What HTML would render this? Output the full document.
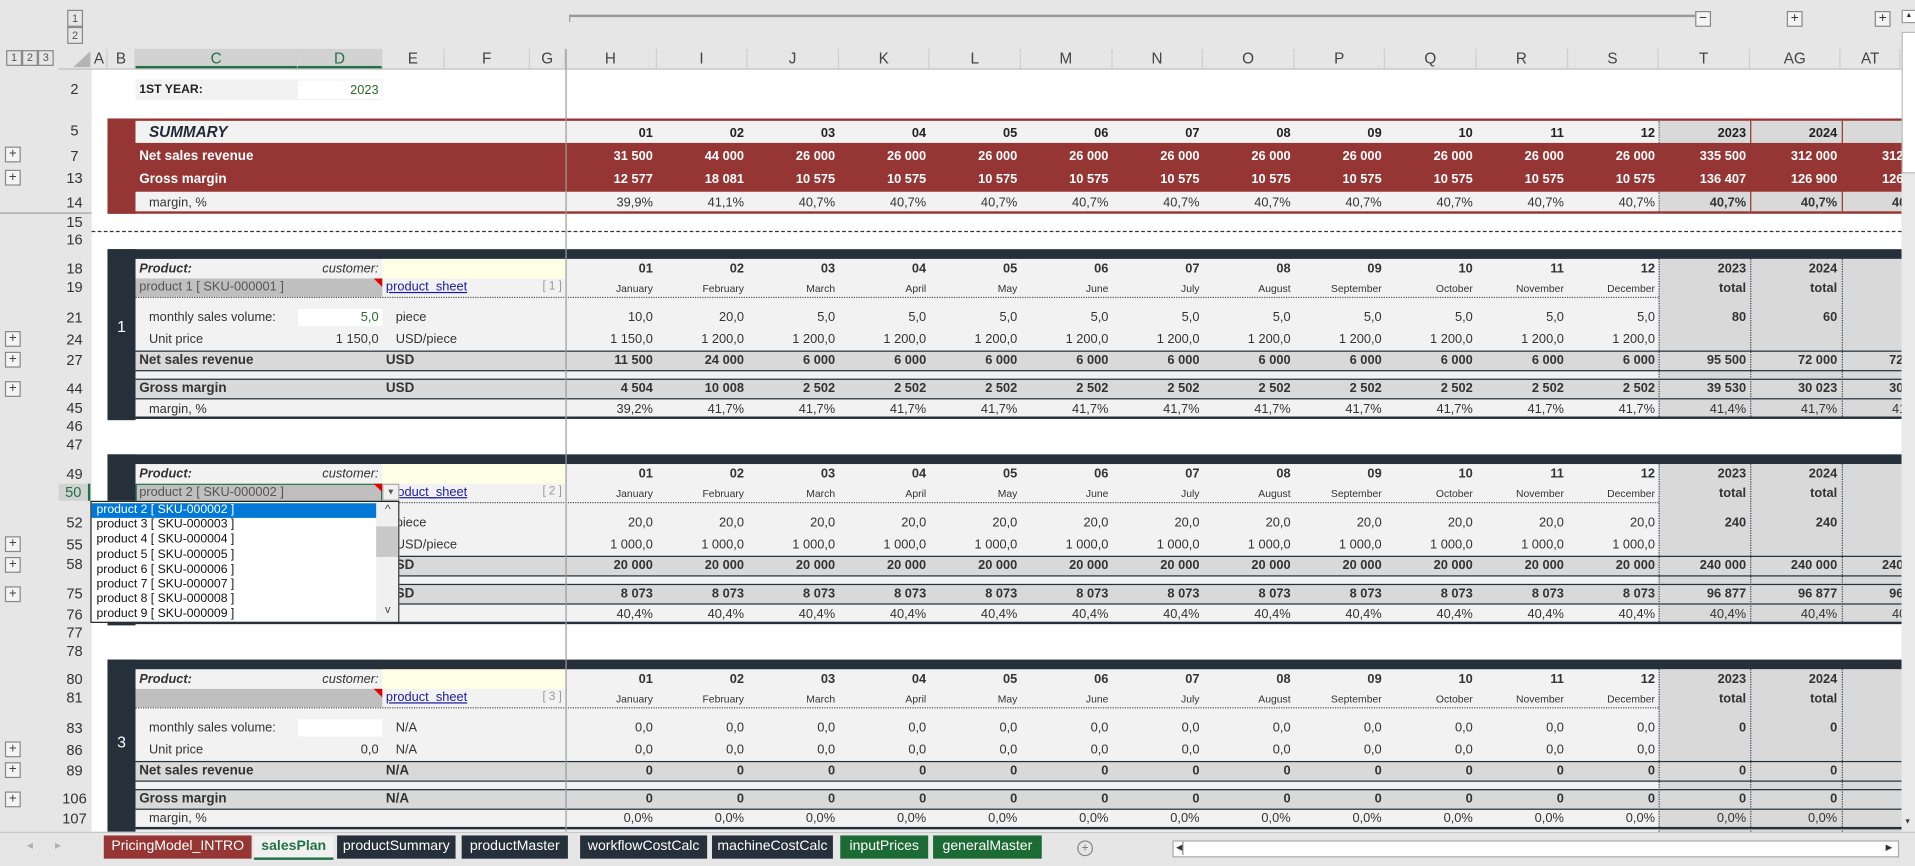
<!DOCTYPE html>
<html><head><meta charset="utf-8">
<style>
html,body{margin:0;padding:0;width:1915px;height:866px;overflow:hidden;background:#e6e6e6}
#w{position:absolute;left:0;top:0;width:1568px;height:709px;transform:scale(1.22130,1.22144);transform-origin:0 0;font-family:"Liberation Sans Narrow","Liberation Sans",sans-serif;font-size:10.5px;color:#333;overflow:hidden;background:#e6e6e6}
.a{position:absolute}
.r{position:absolute;left:463px;width:1094px;display:flex;overflow:hidden;height:16px;line-height:16px}
.r i{flex:0 0 74.6px;text-align:right;padding-right:3px;box-sizing:border-box;font-style:normal;white-space:nowrap}
.b{font-weight:bold}
.sm i{font-size:8.5px}
.rn{position:absolute;left:48px;width:26px;text-align:center;font-size:12px;color:#333;line-height:14px}
.pl{position:absolute;left:4px;width:11px;height:11px;border:1px solid #888;background:#f4f4f4;font-size:11px;line-height:11px;text-align:center;color:#444}
.ch{position:absolute;top:40px;height:16px;line-height:16px;text-align:center;font-size:12.5px;color:#444;border-right:1px solid #cfcfcf;box-sizing:border-box}
.tab{position:absolute;top:684px;height:19px;line-height:19px;text-align:center;font-size:11.5px;color:#fff}
.t{position:absolute;white-space:nowrap;line-height:16px}
.dv{position:absolute;width:0;border-left:1px dotted #3a4654}
</style></head><body><div id="w">

<!-- sheet white area -->
<div class="a" style="left:75px;top:56px;width:1482px;height:625px;background:#fff"></div>

<!-- column headers -->
<div class="a" style="left:60px;top:42px;width:0;height:0;border-left:14px solid transparent;border-bottom:13px solid #b4b4b4"></div>
<div class="ch" style="left:75px;width:13px">A</div>
<div class="ch" style="left:88px;width:23px">B</div>
<div class="ch" style="left:111px;width:133px;background:#d2d2d2;border-bottom:2px solid #217346;color:#217346">C</div>
<div class="ch" style="left:244px;width:69px;background:#d2d2d2;border-bottom:2px solid #217346;color:#217346">D</div>
<div class="ch" style="left:313px;width:51px">E</div>
<div class="ch" style="left:364px;width:70px">F</div>
<div class="ch" style="left:434px;width:29px">G</div>
<div class="a" style="left:463px;top:40px;display:flex">
<div class="ch" style="position:static;width:74.6px">H</div><div class="ch" style="position:static;width:74.6px">I</div><div class="ch" style="position:static;width:74.6px">J</div><div class="ch" style="position:static;width:74.6px">K</div><div class="ch" style="position:static;width:74.6px">L</div><div class="ch" style="position:static;width:74.6px">M</div><div class="ch" style="position:static;width:74.6px">N</div><div class="ch" style="position:static;width:74.6px">O</div><div class="ch" style="position:static;width:74.6px">P</div><div class="ch" style="position:static;width:74.6px">Q</div><div class="ch" style="position:static;width:74.6px">R</div><div class="ch" style="position:static;width:74.6px">S</div><div class="ch" style="position:static;width:74.6px">T</div><div class="ch" style="position:static;width:74.6px">AG</div><div class="ch" style="position:static;width:49px">AT</div>
</div>
<div class="a" style="left:48px;top:56px;width:1509px;height:1px;background:#bdbdbd"></div>

<!-- top outline -->
<div class="a" style="left:55px;top:8px;width:11px;height:12px;border:1px solid #888;font-size:9px;text-align:center;line-height:12px;color:#555">1</div>
<div class="a" style="left:55px;top:22px;width:11px;height:12px;border:1px solid #888;font-size:9px;text-align:center;line-height:12px;color:#555">2</div>
<div class="a" style="left:5px;top:41px;width:11px;height:11px;border:1px solid #888;font-size:9px;text-align:center;line-height:11px;color:#555">1</div>
<div class="a" style="left:18px;top:41px;width:11px;height:11px;border:1px solid #888;font-size:9px;text-align:center;line-height:11px;color:#555">2</div>
<div class="a" style="left:31px;top:41px;width:11px;height:11px;border:1px solid #888;font-size:9px;text-align:center;line-height:11px;color:#555">3</div>
<div class="a" style="left:466px;top:12px;width:922px;height:4px;border-top:2px solid #999;border-left:1px solid #999"></div>
<div class="a" style="left:1388px;top:9px;width:11px;height:11px;border:1px solid #888;background:#f4f4f4;font-size:11px;line-height:10px;text-align:center">−</div>
<div class="a" style="left:1463px;top:9px;width:11px;height:11px;border:1px solid #888;background:#f4f4f4;font-size:11px;line-height:11px;text-align:center">+</div>
<div class="a" style="left:1535px;top:9px;width:11px;height:11px;border:1px solid #888;background:#f4f4f4;font-size:11px;line-height:11px;text-align:center">+</div>

<!-- row numbers -->
<div class="rn" style="top:66px">2</div>
<div class="rn" style="top:100px">5</div>
<div class="rn" style="top:121px">7</div>
<div class="rn" style="top:139px">13</div>
<div class="rn" style="top:159px">14</div>
<div class="rn" style="top:175px">15</div>
<div class="rn" style="top:189px">16</div>
<div class="rn" style="top:213px">18</div>
<div class="rn" style="top:228px">19</div>
<div class="rn" style="top:253px">21</div>
<div class="rn" style="top:271px">24</div>
<div class="rn" style="top:288px">27</div>
<div class="rn" style="top:311px">44</div>
<div class="rn" style="top:327px">45</div>
<div class="rn" style="top:342px">46</div>
<div class="rn" style="top:357px">47</div>
<div class="rn" style="top:381px">49</div>
<div class="rn" style="top:396px;background:#d2d2d2;color:#217346;border-right:2px solid #217346;width:24px">50</div>
<div class="rn" style="top:421px">52</div>
<div class="rn" style="top:439px">55</div>
<div class="rn" style="top:455px">58</div>
<div class="rn" style="top:479px">75</div>
<div class="rn" style="top:496px">76</div>
<div class="rn" style="top:511px">77</div>
<div class="rn" style="top:526px">78</div>
<div class="rn" style="top:549px">80</div>
<div class="rn" style="top:564px">81</div>
<div class="rn" style="top:589px">83</div>
<div class="rn" style="top:607px">86</div>
<div class="rn" style="top:624px">89</div>
<div class="rn" style="top:647px">106</div>
<div class="rn" style="top:663px">107</div>
<div class="a" style="left:0;top:174px;width:75px;height:1px;background:#a0a0a0"></div>

<div class="pl" style="top:120px">+</div><div class="pl" style="top:139px">+</div>
<div class="pl" style="top:271px">+</div><div class="pl" style="top:288px">+</div><div class="pl" style="top:312px">+</div>
<div class="pl" style="top:439px">+</div><div class="pl" style="top:456px">+</div><div class="pl" style="top:480px">+</div>
<div class="pl" style="top:607px">+</div><div class="pl" style="top:624px">+</div><div class="pl" style="top:648px">+</div>

<!-- 1ST YEAR -->
<div class="a" style="left:111px;top:65px;width:202px;height:17px;background:#f2f2f2"></div>
<div class="a" style="left:244px;top:66px;width:68px;height:15px;background:#fff"></div>
<div class="t b" style="left:114px;top:66px;font-size:10px;color:#222">1ST YEAR:</div>
<div class="t" style="left:244px;top:66px;width:66px;text-align:right;color:#2a6b2a">2023</div>

<!-- SUMMARY -->
<div class="a" style="left:88px;top:97px;width:1469px;height:2px;background:#963634"></div>
<div class="a" style="left:88px;top:97px;width:23px;height:78px;background:#963634"></div>
<div class="a" style="left:111px;top:99px;width:1446px;height:18px;background:#f2f2f2"></div>
<div class="a" style="left:111px;top:157px;width:1446px;height:16px;background:#f2f2f2"></div>
<div class="a" style="left:1358px;top:99px;width:199px;height:18px;background:#d9d9d9"></div>
<div class="a" style="left:1358px;top:157px;width:199px;height:16px;background:#d9d9d9"></div>
<div class="a" style="left:88px;top:117px;width:1469px;height:40px;background:#963634"></div>
<div class="a" style="left:88px;top:173px;width:1469px;height:2px;background:#963634"></div>
<div class="dv" style="left:1358px;top:99px;height:18px;border-color:#666"></div><div class="dv" style="left:1358px;top:157px;height:16px;border-color:#666"></div>
<div class="a" style="left:1433px;top:99px;width:1px;height:74px;background:#963634"></div>
<div class="a" style="left:1508px;top:99px;width:1px;height:74px;background:#963634"></div>
<div class="t b" style="left:122px;top:99px;font-size:12.5px;font-style:italic;color:#1f2a36;line-height:18px">SUMMARY</div>
<div class="t b" style="left:114px;top:120px;color:#fff;font-size:11px">Net sales revenue</div>
<div class="t b" style="left:114px;top:139px;color:#fff;font-size:11px">Gross margin</div>
<div class="t" style="left:122px;top:158px;font-size:10.5px">margin, %</div>
<div class="r b" style="top:101px;color:#222"><i>01</i><i>02</i><i>03</i><i>04</i><i>05</i><i>06</i><i>07</i><i>08</i><i>09</i><i>10</i><i>11</i><i>12</i><i>2023</i><i>2024</i><i></i></div>
<div class="r b" style="top:120px;color:#fff"><i>31 500</i><i>44 000</i><i>26 000</i><i>26 000</i><i>26 000</i><i>26 000</i><i>26 000</i><i>26 000</i><i>26 000</i><i>26 000</i><i>26 000</i><i>26 000</i><i>335 500</i><i>312 000</i><i>312 000</i></div>
<div class="r b" style="top:139px;color:#fff"><i>12 577</i><i>18 081</i><i>10 575</i><i>10 575</i><i>10 575</i><i>10 575</i><i>10 575</i><i>10 575</i><i>10 575</i><i>10 575</i><i>10 575</i><i>10 575</i><i>136 407</i><i>126 900</i><i>126 900</i></div>
<div class="r" style="top:158px"><i>39,9%</i><i>41,1%</i><i>40,7%</i><i>40,7%</i><i>40,7%</i><i>40,7%</i><i>40,7%</i><i>40,7%</i><i>40,7%</i><i>40,7%</i><i>40,7%</i><i>40,7%</i><i class="b">40,7%</i><i class="b">40,7%</i><i class="b">40,7%</i></div>

<div class="a" style="left:75px;top:189px;width:1482px;border-top:1px dashed #333"></div>

<!-- BLOCK 1 (o=0) -->
<div class="a" style="left:88px;top:204px;width:1469px;height:8px;background:#25303b"></div>
<div class="a" style="left:88px;top:204px;width:23px;height:140px;background:#25303b"></div>
<div class="a" style="left:111px;top:212px;width:1446px;height:130px;background:#f2f2f2"></div>
<div class="a" style="left:313px;top:212px;width:150px;height:16px;background:#ffffe6"></div>
<div class="a" style="left:111px;top:228px;width:202px;height:15px;background:#bfbfbf"></div>
<div class="a" style="left:306px;top:228px;width:0;height:0;border-left:7px solid transparent;border-top:7px solid #e00000"></div>
<div class="a" style="left:1358px;top:212px;width:199px;height:130px;background:#d9d9d9"></div>
<div class="a" style="left:111px;top:243px;width:1247px;border-top:1px dotted #555"></div>
<div class="a" style="left:111px;top:287px;width:1446px;height:15px;background:#d9d9d9;border-top:1px solid #25303b;border-bottom:1px solid #25303b"></div>
<div class="a" style="left:111px;top:310px;width:1446px;height:15px;background:#d9d9d9;border-top:1px solid #25303b;border-bottom:1px solid #25303b"></div>
<div class="a" style="left:111px;top:341px;width:1446px;height:2px;background:#25303b"></div>
<div class="a" style="left:244px;top:253px;width:69px;height:14px;background:#fff"></div>
<div class="dv" style="left:1358px;top:212px;height:129px"></div><div class="dv" style="left:1433px;top:212px;height:129px"></div><div class="dv" style="left:1508px;top:212px;height:129px"></div>
<div class="t" style="left:88px;top:260px;width:23px;text-align:center;color:#fff;font-size:13px">1</div>
<div class="t b" style="left:114px;top:212px;font-style:italic">Product:</div>
<div class="t" style="left:250px;top:212px;width:60px;text-align:right;font-style:italic">customer:</div>
<div class="t" style="left:114px;top:227px;color:#555">product 1 [ SKU-000001 ]</div>
<div class="t" style="left:316px;top:227px;color:#1a1aa6;text-decoration:underline">product_sheet</div>
<div class="t" style="left:420px;top:227px;width:40px;text-align:right;color:#999;font-size:9.5px">[ 1 ]</div>
<div class="t" style="left:122px;top:252px">monthly sales volume:</div>
<div class="t" style="left:244px;top:252px;width:66px;text-align:right;color:#2a6b2a">5,0</div>
<div class="t" style="left:324px;top:252px">piece</div>
<div class="t" style="left:122px;top:270px">Unit price</div>
<div class="t" style="left:244px;top:270px;width:66px;text-align:right">1 150,0</div>
<div class="t" style="left:324px;top:270px">USD/piece</div>
<div class="t b" style="left:114px;top:287px;font-size:11px">Net sales revenue</div>
<div class="t b" style="left:316px;top:287px;font-size:11px">USD</div>
<div class="t b" style="left:114px;top:310px;font-size:11px">Gross margin</div>
<div class="t b" style="left:316px;top:310px;font-size:11px">USD</div>
<div class="t" style="left:122px;top:327px">margin, %</div>
<div class="r b" style="top:212px"><i>01</i><i>02</i><i>03</i><i>04</i><i>05</i><i>06</i><i>07</i><i>08</i><i>09</i><i>10</i><i>11</i><i>12</i><i>2023</i><i>2024</i><i></i></div>
<div class="r sm" style="top:228px"><i>January</i><i>February</i><i>March</i><i>April</i><i>May</i><i>June</i><i>July</i><i>August</i><i>September</i><i>October</i><i>November</i><i>December</i><i class="b" style="font-size:10.5px">total</i><i class="b" style="font-size:10.5px">total</i><i></i></div>
<div class="r" style="top:252px"><i>10,0</i><i>20,0</i><i>5,0</i><i>5,0</i><i>5,0</i><i>5,0</i><i>5,0</i><i>5,0</i><i>5,0</i><i>5,0</i><i>5,0</i><i>5,0</i><i class="b">80</i><i class="b">60</i><i></i></div>
<div class="r" style="top:270px"><i>1 150,0</i><i>1 200,0</i><i>1 200,0</i><i>1 200,0</i><i>1 200,0</i><i>1 200,0</i><i>1 200,0</i><i>1 200,0</i><i>1 200,0</i><i>1 200,0</i><i>1 200,0</i><i>1 200,0</i><i></i><i></i><i></i></div>
<div class="r b" style="top:287px"><i>11 500</i><i>24 000</i><i>6 000</i><i>6 000</i><i>6 000</i><i>6 000</i><i>6 000</i><i>6 000</i><i>6 000</i><i>6 000</i><i>6 000</i><i>6 000</i><i>95 500</i><i>72 000</i><i>72 000</i></div>
<div class="r b" style="top:310px"><i>4 504</i><i>10 008</i><i>2 502</i><i>2 502</i><i>2 502</i><i>2 502</i><i>2 502</i><i>2 502</i><i>2 502</i><i>2 502</i><i>2 502</i><i>2 502</i><i>39 530</i><i>30 023</i><i>30 023</i></div>
<div class="r" style="top:327px"><i>39,2%</i><i>41,7%</i><i>41,7%</i><i>41,7%</i><i>41,7%</i><i>41,7%</i><i>41,7%</i><i>41,7%</i><i>41,7%</i><i>41,7%</i><i>41,7%</i><i>41,7%</i><i>41,4%</i><i>41,7%</i><i>41,7%</i></div>

<!-- BLOCK 2 (o=168) -->
<div class="a" style="left:88px;top:372px;width:1469px;height:8px;background:#25303b"></div>
<div class="a" style="left:88px;top:372px;width:23px;height:140px;background:#25303b"></div>
<div class="a" style="left:111px;top:380px;width:1446px;height:130px;background:#f2f2f2"></div>
<div class="a" style="left:313px;top:380px;width:150px;height:16px;background:#ffffe6"></div>
<div class="a" style="left:111px;top:396px;width:202px;height:15px;background:#bfbfbf;box-shadow:inset 0 0 0 1px #217346"></div>
<div class="a" style="left:306px;top:396px;width:0;height:0;border-left:7px solid transparent;border-top:7px solid #e00000"></div>
<div class="a" style="left:1358px;top:380px;width:199px;height:130px;background:#d9d9d9"></div>
<div class="a" style="left:111px;top:411px;width:1247px;border-top:1px dotted #555"></div>
<div class="a" style="left:111px;top:455px;width:1446px;height:15px;background:#d9d9d9;border-top:1px solid #25303b;border-bottom:1px solid #25303b"></div>
<div class="a" style="left:111px;top:478px;width:1446px;height:15px;background:#d9d9d9;border-top:1px solid #25303b;border-bottom:1px solid #25303b"></div>
<div class="a" style="left:111px;top:509px;width:1446px;height:2px;background:#25303b"></div>
<div class="dv" style="left:1358px;top:380px;height:129px"></div><div class="dv" style="left:1433px;top:380px;height:129px"></div><div class="dv" style="left:1508px;top:380px;height:129px"></div>
<div class="t b" style="left:114px;top:380px;font-style:italic">Product:</div>
<div class="t" style="left:250px;top:380px;width:60px;text-align:right;font-style:italic">customer:</div>
<div class="t" style="left:114px;top:395px;color:#555">product 2 [ SKU-000002 ]</div>
<div class="t" style="left:316px;top:395px;color:#1a1aa6;text-decoration:underline">product_sheet</div>
<div class="t" style="left:420px;top:395px;width:40px;text-align:right;color:#999;font-size:9.5px">[ 2 ]</div>
<div class="t" style="left:324px;top:420px">piece</div>
<div class="t" style="left:324px;top:438px">USD/piece</div>
<div class="t b" style="left:316px;top:455px;font-size:11px">USD</div>
<div class="t b" style="left:316px;top:478px;font-size:11px">USD</div>
<div class="r b" style="top:380px"><i>01</i><i>02</i><i>03</i><i>04</i><i>05</i><i>06</i><i>07</i><i>08</i><i>09</i><i>10</i><i>11</i><i>12</i><i>2023</i><i>2024</i><i></i></div>
<div class="r sm" style="top:396px"><i>January</i><i>February</i><i>March</i><i>April</i><i>May</i><i>June</i><i>July</i><i>August</i><i>September</i><i>October</i><i>November</i><i>December</i><i class="b" style="font-size:10.5px">total</i><i class="b" style="font-size:10.5px">total</i><i></i></div>
<div class="r" style="top:420px"><i>20,0</i><i>20,0</i><i>20,0</i><i>20,0</i><i>20,0</i><i>20,0</i><i>20,0</i><i>20,0</i><i>20,0</i><i>20,0</i><i>20,0</i><i>20,0</i><i class="b">240</i><i class="b">240</i><i></i></div>
<div class="r" style="top:438px"><i>1 000,0</i><i>1 000,0</i><i>1 000,0</i><i>1 000,0</i><i>1 000,0</i><i>1 000,0</i><i>1 000,0</i><i>1 000,0</i><i>1 000,0</i><i>1 000,0</i><i>1 000,0</i><i>1 000,0</i><i></i><i></i><i></i></div>
<div class="r b" style="top:455px"><i>20 000</i><i>20 000</i><i>20 000</i><i>20 000</i><i>20 000</i><i>20 000</i><i>20 000</i><i>20 000</i><i>20 000</i><i>20 000</i><i>20 000</i><i>20 000</i><i>240 000</i><i>240 000</i><i>240 000</i></div>
<div class="r b" style="top:478px"><i>8 073</i><i>8 073</i><i>8 073</i><i>8 073</i><i>8 073</i><i>8 073</i><i>8 073</i><i>8 073</i><i>8 073</i><i>8 073</i><i>8 073</i><i>8 073</i><i>96 877</i><i>96 877</i><i>96 877</i></div>
<div class="r" style="top:495px"><i>40,4%</i><i>40,4%</i><i>40,4%</i><i>40,4%</i><i>40,4%</i><i>40,4%</i><i>40,4%</i><i>40,4%</i><i>40,4%</i><i>40,4%</i><i>40,4%</i><i>40,4%</i><i>40,4%</i><i>40,4%</i><i>40,4%</i></div>

<!-- BLOCK 3 (o=336) -->
<div class="a" style="left:88px;top:540px;width:1469px;height:8px;background:#25303b"></div>
<div class="a" style="left:88px;top:540px;width:23px;height:141px;background:#25303b"></div>
<div class="a" style="left:111px;top:548px;width:1446px;height:133px;background:#f2f2f2"></div>
<div class="a" style="left:313px;top:548px;width:150px;height:16px;background:#ffffe6"></div>
<div class="a" style="left:111px;top:564px;width:202px;height:15px;background:#bfbfbf"></div>
<div class="a" style="left:306px;top:564px;width:0;height:0;border-left:7px solid transparent;border-top:7px solid #e00000"></div>
<div class="a" style="left:1358px;top:548px;width:199px;height:133px;background:#d9d9d9"></div>
<div class="a" style="left:111px;top:579px;width:1247px;border-top:1px dotted #555"></div>
<div class="a" style="left:111px;top:623px;width:1446px;height:15px;background:#d9d9d9;border-top:1px solid #25303b;border-bottom:1px solid #25303b"></div>
<div class="a" style="left:111px;top:646px;width:1446px;height:15px;background:#d9d9d9;border-top:1px solid #25303b;border-bottom:1px solid #25303b"></div>
<div class="a" style="left:111px;top:677px;width:1446px;height:2px;background:#25303b"></div>
<div class="a" style="left:244px;top:589px;width:69px;height:14px;background:#fff"></div>
<div class="dv" style="left:1358px;top:548px;height:133px"></div><div class="dv" style="left:1433px;top:548px;height:133px"></div><div class="dv" style="left:1508px;top:548px;height:133px"></div>
<div class="t" style="left:88px;top:600px;width:23px;text-align:center;color:#fff;font-size:13px">3</div>
<div class="t b" style="left:114px;top:548px;font-style:italic">Product:</div>
<div class="t" style="left:250px;top:548px;width:60px;text-align:right;font-style:italic">customer:</div>
<div class="t" style="left:316px;top:563px;color:#1a1aa6;text-decoration:underline">product_sheet</div>
<div class="t" style="left:420px;top:563px;width:40px;text-align:right;color:#999;font-size:9.5px">[ 3 ]</div>
<div class="t" style="left:122px;top:588px">monthly sales volume:</div>
<div class="t" style="left:324px;top:588px">N/A</div>
<div class="t" style="left:122px;top:606px">Unit price</div>
<div class="t" style="left:244px;top:606px;width:66px;text-align:right">0,0</div>
<div class="t" style="left:324px;top:606px">N/A</div>
<div class="t b" style="left:114px;top:623px;font-size:11px">Net sales revenue</div>
<div class="t b" style="left:316px;top:623px;font-size:11px">N/A</div>
<div class="t b" style="left:114px;top:646px;font-size:11px">Gross margin</div>
<div class="t b" style="left:316px;top:646px;font-size:11px">N/A</div>
<div class="t" style="left:122px;top:662px">margin, %</div>
<div class="r b" style="top:548px"><i>01</i><i>02</i><i>03</i><i>04</i><i>05</i><i>06</i><i>07</i><i>08</i><i>09</i><i>10</i><i>11</i><i>12</i><i>2023</i><i>2024</i><i></i></div>
<div class="r sm" style="top:564px"><i>January</i><i>February</i><i>March</i><i>April</i><i>May</i><i>June</i><i>July</i><i>August</i><i>September</i><i>October</i><i>November</i><i>December</i><i class="b" style="font-size:10.5px">total</i><i class="b" style="font-size:10.5px">total</i><i></i></div>
<div class="r" style="top:588px"><i>0,0</i><i>0,0</i><i>0,0</i><i>0,0</i><i>0,0</i><i>0,0</i><i>0,0</i><i>0,0</i><i>0,0</i><i>0,0</i><i>0,0</i><i>0,0</i><i class="b">0</i><i class="b">0</i><i></i></div>
<div class="r" style="top:606px"><i>0,0</i><i>0,0</i><i>0,0</i><i>0,0</i><i>0,0</i><i>0,0</i><i>0,0</i><i>0,0</i><i>0,0</i><i>0,0</i><i>0,0</i><i>0,0</i><i></i><i></i><i></i></div>
<div class="r b" style="top:623px"><i>0</i><i>0</i><i>0</i><i>0</i><i>0</i><i>0</i><i>0</i><i>0</i><i>0</i><i>0</i><i>0</i><i>0</i><i>0</i><i>0</i><i></i></div>
<div class="r b" style="top:646px"><i>0</i><i>0</i><i>0</i><i>0</i><i>0</i><i>0</i><i>0</i><i>0</i><i>0</i><i>0</i><i>0</i><i>0</i><i>0</i><i>0</i><i></i></div>
<div class="r" style="top:662px"><i>0,0%</i><i>0,0%</i><i>0,0%</i><i>0,0%</i><i>0,0%</i><i>0,0%</i><i>0,0%</i><i>0,0%</i><i>0,0%</i><i>0,0%</i><i>0,0%</i><i>0,0%</i><i>0,0%</i><i>0,0%</i><i></i></div>

<!-- freeze line -->
<div class="a" style="left:463px;top:40px;width:1px;height:641px;background:#9a9a9a"></div>

<!-- dropdown -->
<div class="a" style="left:313px;top:396px;width:14px;height:14px;background:#f0f0f0;border:1px solid #aaa;box-sizing:border-box;font-size:7px;text-align:center;line-height:13px;color:#555">▼</div>
<div class="a" style="left:74px;top:410px;width:253px;height:100px;background:#fff;border:1px solid #222;box-sizing:border-box;overflow:hidden;font-size:10px;line-height:12.2px">
<div style="background:#0078d7;color:#fff;width:232px;padding-left:4px;margin-top:1px">product 2 [ SKU-000002 ]</div>
<div style="padding-left:4px;color:#111">product 3 [ SKU-000003 ]</div>
<div style="padding-left:4px;color:#111">product 4 [ SKU-000004 ]</div>
<div style="padding-left:4px;color:#111">product 5 [ SKU-000005 ]</div>
<div style="padding-left:4px;color:#111">product 6 [ SKU-000006 ]</div>
<div style="padding-left:4px;color:#111">product 7 [ SKU-000007 ]</div>
<div style="padding-left:4px;color:#111">product 8 [ SKU-000008 ]</div>
<div style="padding-left:4px;color:#111">product 9 [ SKU-000009 ]</div>
<div class="a" style="left:233px;top:0;width:19px;height:98px;background:#f0f0f0"></div>
<div class="a" style="left:233px;top:20px;width:19px;height:25px;background:#c8c8c8"></div>
<div class="a" style="left:233px;top:1px;width:19px;text-align:center;font-size:10px;color:#444">^</div>
<div class="a" style="left:233px;top:82px;width:19px;text-align:center;font-size:9px;color:#444">v</div>
</div>

<!-- vertical scrollbar -->
<div class="a" style="left:1557px;top:8px;width:11px;height:673px;background:#e9e9e9"></div>
<div class="a" style="left:1557px;top:8px;width:10px;height:9px;border:1px solid #999;background:#fff;font-size:6px;text-align:center;line-height:9px">▲</div>
<div class="a" style="left:1557px;top:26px;width:10px;height:114px;border:1px solid #bbb;background:#fff"></div>
<div class="a" style="left:1557px;top:668px;width:10px;height:10px;font-size:6px;text-align:center;line-height:10px">▼</div>

<!-- tab bar -->
<div class="a" style="left:0;top:681px;width:1568px;height:28px;background:#e6e6e6;border-top:1px solid #c6c6c6"></div>
<div class="t" style="left:22px;top:685px;color:#b0b0b0;font-size:10px">◂</div>
<div class="t" style="left:45px;top:685px;color:#b0b0b0;font-size:10px">▸</div>
<div class="tab" style="left:85px;width:121px;background:#963634">PricingModel_INTRO</div>
<div class="tab b" style="left:208px;width:65px;background:#f0f0f0;color:#217346;border-bottom:2px solid #217346;height:18px">salesPlan</div>
<div class="tab" style="left:276px;width:97px;background:#25303b">productSummary</div>
<div class="tab" style="left:378px;width:87px;background:#25303b">productMaster</div>
<div class="tab" style="left:475px;width:104px;background:#25303b">workflowCostCalc</div>
<div class="tab" style="left:583px;width:99px;background:#25303b">machineCostCalc</div>
<div class="tab" style="left:688px;width:72px;background:#1d6b34">inputPrices</div>
<div class="tab" style="left:764px;width:89px;background:#1d6b34">generalMaster</div>
<div class="a" style="left:882px;top:688px;width:11px;height:11px;border:1px solid #888;border-radius:50%;font-size:10px;line-height:11px;text-align:center;color:#777">+</div>
<div class="a" style="left:960px;top:688px;width:593px;height:12px;background:#fff;border:1px solid #aaa"></div>
<div class="a" style="left:963px;top:690px;font-size:7px;color:#333">◀</div>
<div class="a" style="left:968px;top:689px;width:1px;height:11px;background:#888"></div>
<div class="a" style="left:1544px;top:690px;font-size:7px;color:#333">▶</div>
</div></body></html>
